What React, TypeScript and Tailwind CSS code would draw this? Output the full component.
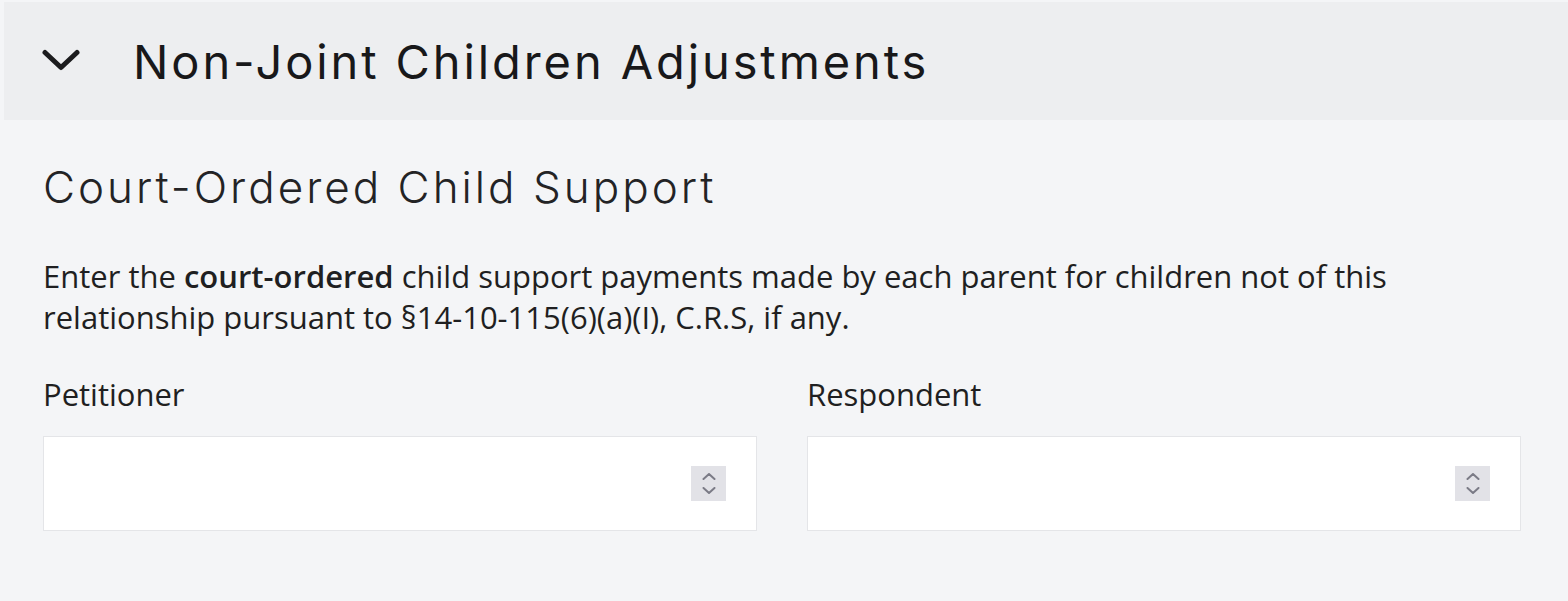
import React from 'react';

function Chevron() {
  return (
    <svg width="40" height="24" viewBox="0 0 40 24" fill="none" className="shrink-0">
      <polyline
        points="4,3.5 20,18.5 36,3.5"
        stroke="#1c1c1e"
        strokeWidth="5"
        strokeLinecap="round"
        strokeLinejoin="round"
      />
    </svg>
  );
}

function Spinner() {
  return (
    <div className="flex h-[35px] w-[35px] flex-col items-center justify-center gap-[7px] bg-[#e2e2e7]">
      <svg width="14" height="7" viewBox="0 0 14 7" fill="none">
        <polyline points="1.5,6 7,1 12.5,6" stroke="#7b7b86" strokeWidth="2" strokeLinecap="round" strokeLinejoin="round" />
      </svg>
      <svg width="14" height="7" viewBox="0 0 14 7" fill="none">
        <polyline points="1.5,1 7,6 12.5,1" stroke="#7b7b86" strokeWidth="2" strokeLinecap="round" strokeLinejoin="round" />
      </svg>
    </div>
  );
}

function NumberField({ label }: { label: string }) {
  return (
    <div className="flex flex-col">
      <label className="text-[31px] leading-[41px] text-[#1f1f21]">{label}</label>
      <div className="mt-[21px] flex h-[95px] items-center justify-end border border-[#e4e5e8] bg-white pr-[30px]">
        <Spinner />
      </div>
    </div>
  );
}

export default function App() {
  return (
    <div
      className="min-h-[601px] bg-[#f4f5f7] pl-[4px] pt-[2px]"
      style={{ fontFamily: '"Open Sans", "Liberation Sans", sans-serif' }}
    >
      <div className="flex h-[118px] items-center gap-[52px] bg-[#edeef0] pl-[37px]">
        <Chevron />
        <h2
          className="text-[47px] font-normal leading-none tracking-[2.9px] text-[#18181a]"
          style={{ fontFamily: 'Inter, "Noto Sans", sans-serif' }}
        >
          Non-Joint Children Adjustments
        </h2>
      </div>

      <div className="pb-[70px] pl-[39px] pr-[47px] pt-[39px]">
        <h3
          className="text-[44px] font-light leading-[56px] tracking-[3px] text-[#232325]"
          style={{ fontFamily: 'Inter, "Noto Sans", sans-serif' }}
        >
          Court-Ordered Child Support
        </h3>

        <p className="mt-[41px] text-[31px] leading-[41px] text-[#1f1f21]">
          Enter the <span className="font-semibold">court-ordered</span> child support payments made by each parent for
          children not of this relationship pursuant to §14-10-115(6)(a)(I), C.R.S, if any.
        </p>

        <div className="mt-[36px] grid grid-cols-2 gap-[50px]">
          <NumberField label="Petitioner" />
          <NumberField label="Respondent" />
        </div>
      </div>
    </div>
  );
}
